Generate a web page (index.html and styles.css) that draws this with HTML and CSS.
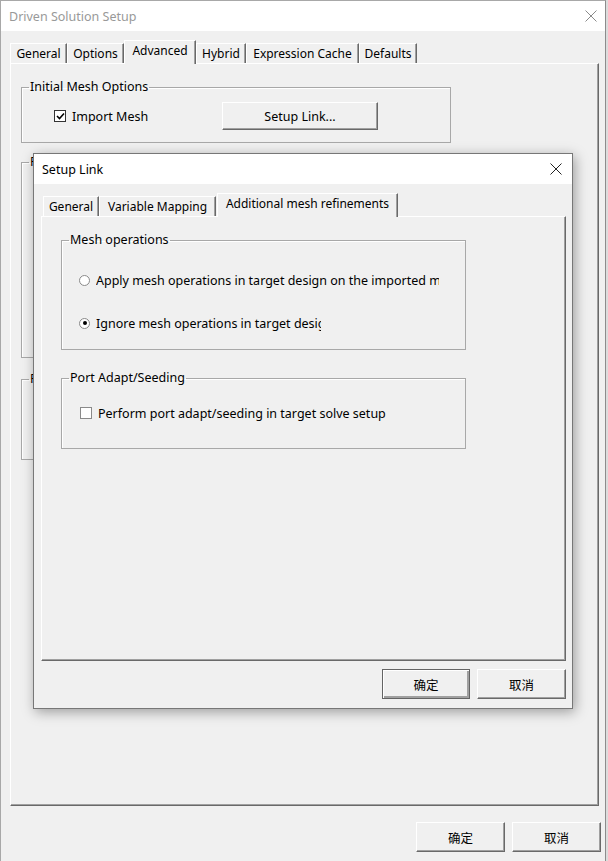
FILE: index.html
```html
<!DOCTYPE html>
<html>

<head>
    <meta charset="utf-8">
    <title>Driven Solution Setup</title>
    <link rel="stylesheet" href="styles.css">
</head>

<body>
    <div class="window">
        <div class="titlebar">
            <span class="title">Driven Solution Setup</span>
            <svg class="close" width="12" height="12" viewBox="0 0 12 12">
                <path d="M0.5 0.5 L11.5 11.5 M11.5 0.5 L0.5 11.5" stroke="#8a8a8a" stroke-width="1" fill="none" />
            </svg>
        </div>

        <div class="client">
            <div class="tabs">
                <div class="tab t-general">General</div>
                <div class="tab t-options">Options</div>
                <div class="tab t-advanced active">Advanced</div>
                <div class="tab t-hybrid">Hybrid</div>
                <div class="tab t-cache">Expression Cache</div>
                <div class="tab t-defaults">Defaults</div>
            </div>

            <div class="panel main-panel">
                <fieldset class="group initial">
                    <legend>Initial Mesh Options</legend>
                    <div class="row">
                        <label class="check import">
                            <span class="box">
                                <svg width="9" height="9" viewBox="0 0 9 9">
                                    <path d="M1 4 L3.5 6.5 L8 1.5" stroke="#000" stroke-width="1.6" fill="none" />
                                </svg>
                            </span>
                            Import Mesh
                        </label>
                        <button class="btn setup">Setup Link...</button>
                    </div>
                </fieldset>

                <fieldset class="group behind1">
                    <legend>Port Options</legend>
                    <div class="filler"></div>
                </fieldset>

                <fieldset class="group behind2">
                    <legend>Port Adapt/Seeding</legend>
                    <div class="filler"></div>
                </fieldset>
            </div>

            <div class="buttons main-buttons">
                <button class="btn">确定</button>
                <button class="btn">取消</button>
            </div>
        </div>

        <!-- modal dialog on top of the main window -->
        <div class="dialog">
            <div class="titlebar dlg-title">
                <span class="title">Setup Link</span>
                <svg class="close" width="12" height="12" viewBox="0 0 12 12">
                    <path d="M0.5 0.5 L11.5 11.5 M11.5 0.5 L0.5 11.5" stroke="#222" stroke-width="1" fill="none" />
                </svg>
            </div>

            <div class="dlg-body">
                <div class="tabs dlg-tabs">
                    <div class="tab d-general">General</div>
                    <div class="tab d-mapping">Variable Mapping</div>
                    <div class="tab d-refine active">Additional mesh refinements</div>
                </div>

                <div class="panel dlg-panel">
                    <fieldset class="group meshops">
                        <legend>Mesh operations</legend>
                        <div class="inner">
                            <label class="radio">
                                <span class="dot"></span>
                                <span class="clip apply">Apply mesh operations in target design on the imported mesh</span>
                            </label>
                            <label class="radio">
                                <span class="dot on"></span>
                                <span class="clip ignore">Ignore mesh operations in target design</span>
                            </label>
                        </div>
                    </fieldset>

                    <fieldset class="group port">
                        <legend>Port Adapt/Seeding</legend>
                        <div class="inner">
                            <label class="check">
                                <span class="box empty"></span>
                                Perform port adapt/seeding in target solve setup
                            </label>
                        </div>
                    </fieldset>
                </div>

                <div class="buttons dlg-buttons">
                    <button class="btn default">确定</button>
                    <button class="btn">取消</button>
                </div>
            </div>
        </div>
    </div>
</body>

</html>
```

FILE: styles.css
```css
body {
    margin: 0;
    width: 608px;
    height: 861px;
    overflow: hidden;
    background: #dcdcdc;
    font-family: "Noto Sans", "Noto Sans CJK SC", sans-serif;
    font-size: 12px;
    color: #000;
}

.window {
    position: relative;
    width: 606px;
    height: 861px;
    border-left: 1px solid #a8a8a8;
    border-right: 1px solid #8c8c8c;
    border-top: 1px solid #a8a8a8;
    box-sizing: border-box;
    background: #f0f0f0;
}

.titlebar {
    display: flex;
    align-items: center;
    justify-content: space-between;
    height: 30px;
    background: #fff;
    padding: 0 8px 0 8px;
}

.titlebar .title {
    color: #999;
    font-size: 12.5px;
}

.client {
    padding: 10px 4px 0 9px;
}

/* tab strip */
.tabs {
    display: flex;
    align-items: flex-end;
    height: 22px;
    position: relative;
    z-index: 2;
}

.tab {
    box-sizing: border-box;
    height: 20px;
    line-height: 19px;
    text-align: center;
    background: #f0f0f0;
    border-top: 1px solid #fff;
    border-left: 1px solid #fff;
    border-right: 1px solid #696969;
    box-shadow: inset -1px 0 #a0a0a0;
    white-space: nowrap;
}

.tab.active {
    height: 24px;
    line-height: 20px;
    margin-bottom: -1px;
}

.t-general { width: 57px; }
.t-options { width: 57px; }
.t-advanced { width: 72px; }
.t-hybrid { width: 50px; }
.t-cache { width: 113px; }
.t-defaults { width: 58px; }

.panel {
    box-sizing: border-box;
    border-top: 1px solid #fff;
    border-left: 1px solid #fff;
    border-right: 1px solid #696969;
    border-bottom: 1px solid #696969;
    box-shadow: inset -1px -1px #a0a0a0;
}

.main-panel {
    width: 589px;
    height: 743px;
    padding: 15px 0 0 10px;
}

/* group boxes */
.group {
    margin: 0;
    padding: 0;
    min-width: 0;
    box-sizing: border-box;
    border: 1px solid #a8a8a8;
    box-shadow: inset 1px 1px #fff;
}

.group legend {
    margin-left: 7px;
    padding: 0 1px;
    line-height: 16px;
    font-size: 12.5px;
}

.initial {
    width: 430px;
}

.initial .row {
    padding: 7px 0 12px 32px;
}

.row {
    display: flex;
    align-items: center;
}

.check {
    display: flex;
    align-items: center;
    font-size: 12.5px;
}

.import {
    width: 168px;
}

.box {
    display: inline-flex;
    align-items: center;
    justify-content: center;
    width: 12px;
    height: 12px;
    border: 1px solid #333;
    background: #fff;
    margin-right: 6px;
    box-sizing: border-box;
}

.box.empty {
    border-color: #8a8a8a;
}

.behind1,
.behind2 {
    width: 430px;
}

.behind1 {
    margin-top: 11px;
}

.behind1 .filler {
    height: 187px;
}

.behind2 {
    margin-top: 13px;
}

.behind2 .filler {
    height: 72px;
}

/* buttons */
.btn {
    font-family: "Noto Sans CJK SC", "Noto Sans", sans-serif;
    font-size: 12.5px;
    color: #000;
    background: #f0f0f0;
    border-top: 1px solid #fff;
    border-left: 1px solid #fff;
    border-right: 1px solid #696969;
    border-bottom: 1px solid #696969;
    box-shadow: inset -1px -1px #a0a0a0;
    width: 89px;
    height: 30px;
    padding: 0;
}

.btn.default {
    border: 1px solid #646464;
    box-shadow: inset 1px 1px #fff, inset -2px -2px #a0a0a0;
    width: 88px;
}

.setup {
    width: 156px;
    height: 28px;
    font-family: "Noto Sans", sans-serif;
}

.buttons {
    display: flex;
    justify-content: flex-end;
    gap: 7px;
}

.main-buttons {
    margin-top: 16px;
}

/* dialog */
.dialog {
    position: absolute;
    left: 32px;
    top: 152px;
    width: 540px;
    height: 556px;
    box-sizing: border-box;
    border: 1px solid #777;
    background: #f0f0f0;
    box-shadow: 2px 3px 12px rgba(0, 0, 0, 0.35);
}

.dlg-title {
    padding: 0 10px 0 8px;
    height: 30px;
}

.dlg-title .title {
    color: #000;
}

.dlg-body {
    padding: 9px 6px 0 7px;
}

.dlg-tabs {
    padding-left: 2px;
    height: 23px;
}

.d-general { width: 56px; }
.d-mapping { width: 117px; }
.d-refine { width: 181px; margin-left: 1px; }

.dlg-panel {
    width: 525px;
    height: 445px;
    padding: 15px 0 0 19px;
}

.meshops {
    width: 405px;
}

.meshops .inner {
    padding: 22px 0 16px 17px;
}

.radio {
    display: flex;
    align-items: center;
    height: 20px;
    font-size: 12.5px;
}

.radio + .radio {
    margin-top: 23px;
}

.dot {
    position: relative;
    width: 11px;
    height: 11px;
    border-radius: 50%;
    border: 1px solid #8a8a8a;
    background: #fff;
    box-sizing: border-box;
    margin-right: 6px;
    flex: none;
}

.dot.on::after {
    content: "";
    position: absolute;
    left: 2.5px;
    top: 2.5px;
    width: 4px;
    height: 4px;
    border-radius: 50%;
    background: #000;
}

.clip {
    overflow: hidden;
    white-space: nowrap;
}

.apply {
    width: 343px;
}

.ignore {
    width: 225px;
}

.port {
    width: 405px;
    margin-top: 20px;
}

.port .inner {
    padding: 17px 0 25px 18px;
}

.port .check {
    height: 20px;
}

.dlg-buttons {
    margin-top: 8px;
}
```
